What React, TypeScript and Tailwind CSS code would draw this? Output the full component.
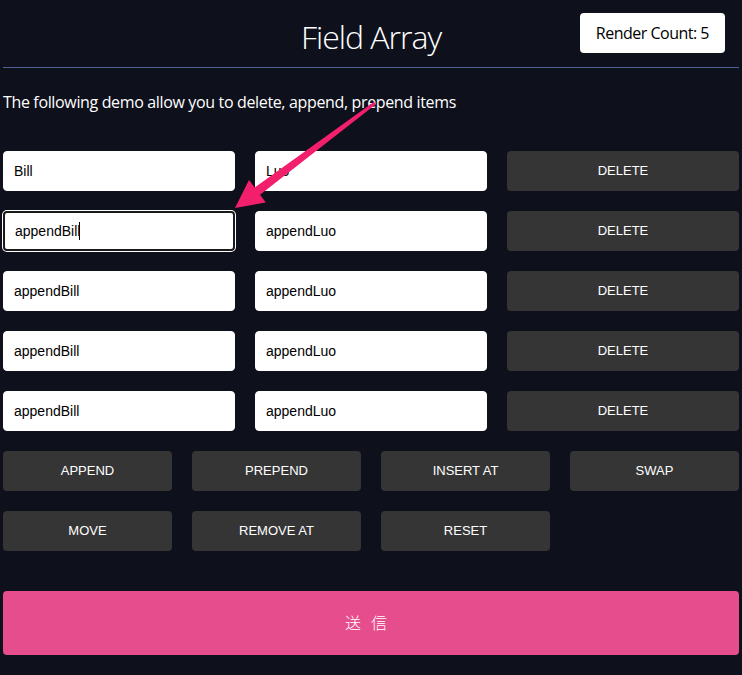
import { useState } from 'react';

const rows = [
  { first: 'Bill', last: 'Luo' },
  { first: 'appendBill', last: 'appendLuo' },
  { first: 'appendBill', last: 'appendLuo' },
  { first: 'appendBill', last: 'appendLuo' },
  { first: 'appendBill', last: 'appendLuo' },
];

const actions = ['append', 'prepend', 'insert at', 'swap', 'move', 'remove at', 'reset'];

function Arrow() {
  return (
    <svg
      className="pointer-events-none absolute left-0 top-0"
      width="742"
      height="675"
      viewBox="0 0 742 675"
    >
      <polygon
        points="375.9,104.2 374.1,101.8 254.7,187.6 249,180 235,208 265.8,202.4 260.1,194.8"
        fill="#f21f6c"
      />
    </svg>
  );
}

export default function App() {
  const [count] = useState(5);

  return (
    <div className="relative min-h-[675px] bg-[#0e101c] px-[3px] font-['Open_Sans','Noto_Sans_CJK_JP',sans-serif] text-white">
      {/* Header */}
      <div className="grid grid-cols-[1fr_auto_1fr] items-start pt-[13px]">
        <div />
        <h1 className="mt-[4px] text-[32px] leading-[40px] font-light tracking-[-1px]">Field Array</h1>
        <div className="flex justify-end pr-[14px]">
          <div className="flex h-10 items-center rounded bg-white px-4 text-[16px] tracking-[-0.5px] text-black">
            Render Count: {count}
          </div>
        </div>
      </div>
      <hr className="mt-[10px] border-0 border-t border-[#4f6294]" />

      <p className="mt-[22px] text-[16px] leading-6 tracking-[-0.35px]">
        The following demo allow you to delete, append, prepend items
      </p>

      {/* Field rows */}
      <div className="mt-[37px] flex flex-col gap-5">
        {rows.map((row, i) => (
          <div key={i} className="grid grid-cols-3 gap-5">
            <div className="relative">
              <input
                readOnly
                defaultValue={row.first}
                className={`h-10 w-full rounded bg-white px-[10px] font-['Liberation_Sans',Arial,sans-serif] text-[14px] text-black outline-none ${
                  i === 1 ? 'border-2 border-[#1a1a1a] px-[9px] ring-1 ring-white' : 'border border-white'
                }`}
              />
              {i === 1 && (
                <span className="absolute left-[76px] top-[11px] h-[18px] w-px bg-black" />
              )}
            </div>
            <input
              readOnly
              defaultValue={row.last}
              className="h-10 w-full rounded border border-white bg-white px-[10px] font-['Liberation_Sans',Arial,sans-serif] text-[14px] text-black outline-none"
            />
            <button className="h-10 rounded bg-[#353535] font-['Liberation_Sans',Arial,sans-serif] text-[13px] uppercase">
              delete
            </button>
          </div>
        ))}
      </div>

      {/* Actions */}
      <div className="mt-5 grid grid-cols-4 gap-5">
        {actions.map((a) => (
          <button
            key={a}
            className="h-10 rounded bg-[#353535] font-['Liberation_Sans',Arial,sans-serif] text-[13px] uppercase"
          >
            {a}
          </button>
        ))}
      </div>

      <button className="mt-10 h-16 w-full rounded bg-[#e64d8c] text-[16px] font-light tracking-[10px] text-white">
        送信
      </button>

      <Arrow />
    </div>
  );
}
